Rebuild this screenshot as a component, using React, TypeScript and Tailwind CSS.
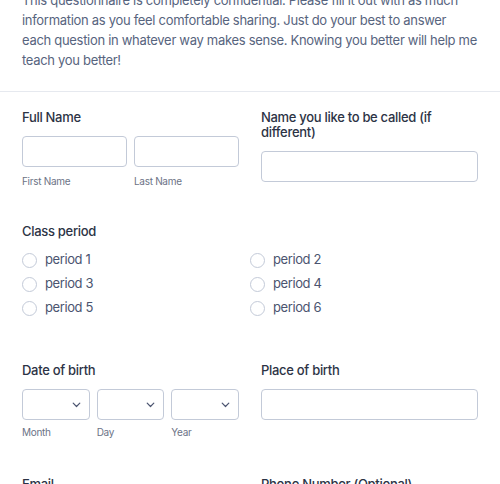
import React from 'react';

const font = { fontFamily: 'Inter, "Noto Sans", sans-serif' };

const Label: React.FC<{ children: React.ReactNode }> = ({ children }) => (
  <div className="text-[13px] leading-[15px] font-medium tracking-[-0.3px] text-[#2c3345] mb-[11px]">{children}</div>
);

const Input: React.FC = () => (
  <div className="h-[31px] w-full rounded-[4px] border border-[#c3cad8] bg-white" />
);

const Select: React.FC = () => (
  <div className="h-[31px] w-full rounded-[4px] border border-[#c3cad8] bg-white flex items-center justify-end pr-[8px]">
    <svg width="9" height="6" viewBox="0 0 9 6" fill="none">
      <path d="M1.2 1.2l3.3 3.3 3.3-3.3" stroke="#4b5470" strokeWidth="1.2" strokeLinecap="round" strokeLinejoin="round" />
    </svg>
  </div>
);

const Sub: React.FC<{ children: React.ReactNode }> = ({ children }) => (
  <div className="text-[10px] leading-[14px] tracking-[-0.3px] text-[#6c7386]">{children}</div>
);

const Radio: React.FC<{ label: string }> = ({ label }) => (
  <div className="flex items-center h-[24px]">
    <span className="w-[15px] h-[15px] rounded-full border border-[#c3cad8] bg-white shrink-0" />
    <span className="ml-[8px] text-[13px] tracking-[-0.4px] text-[#4b5470]">{label}</span>
  </div>
);

export default function App() {
  return (
    <div className="w-[500px] h-[484px] overflow-hidden bg-white" style={font}>
      <div className="border-b border-[#e6e9ef] px-[22px] pb-[21px]">
        <p className="mt-[-10px] text-[13px] leading-[20px] tracking-[-0.3px] text-[#57647e] whitespace-nowrap">
          This questionnaire is completely confidential. Please fill it out with as much
          <br />
          information as you feel comfortable sharing. Just do your best to answer
          <br />
          each question in whatever way makes sense. Knowing you better will help me
          <br />
          teach you better!
        </p>
      </div>

      <div className="px-[22px]">
        <div className="grid grid-cols-2 gap-x-[22px] pt-[18px]">
          <div>
            <Label>Full Name</Label>
            <div className="grid grid-cols-2 gap-[7px]">
              <div>
                <Input />
                <div className="mt-[7px]">
                  <Sub>First Name</Sub>
                </div>
              </div>
              <div>
                <Input />
                <div className="mt-[7px]">
                  <Sub>Last Name</Sub>
                </div>
              </div>
            </div>
          </div>
          <div>
            <Label>Name you like to be called (if different)</Label>
            <Input />
          </div>
        </div>

        <div className="mt-[36px]">
          <div className="text-[13px] leading-[15px] font-medium tracking-[-0.3px] text-[#2c3345] mb-[9px]">
            Class period
          </div>
          <div className="grid grid-cols-2">
            <Radio label="period 1" />
            <Radio label="period 2" />
            <Radio label="period 3" />
            <Radio label="period 4" />
            <Radio label="period 5" />
            <Radio label="period 6" />
          </div>
        </div>

        <div className="grid grid-cols-2 gap-x-[22px] mt-[43px]">
          <div>
            <Label>Date of birth</Label>
            <div className="grid grid-cols-3 gap-[7px]">
              <div>
                <Select />
                <div className="mt-[5px]">
                  <Sub>Month</Sub>
                </div>
              </div>
              <div>
                <Select />
                <div className="mt-[5px]">
                  <Sub>Day</Sub>
                </div>
              </div>
              <div>
                <Select />
                <div className="mt-[5px]">
                  <Sub>Year</Sub>
                </div>
              </div>
            </div>
          </div>
          <div>
            <Label>Place of birth</Label>
            <Input />
          </div>
        </div>

        <div className="grid grid-cols-2 gap-x-[22px] mt-[38px]">
          <div>
            <Label>Email</Label>
            <Input />
          </div>
          <div>
            <Label>Phone Number (Optional)</Label>
            <Input />
          </div>
        </div>
      </div>
    </div>
  );
}
